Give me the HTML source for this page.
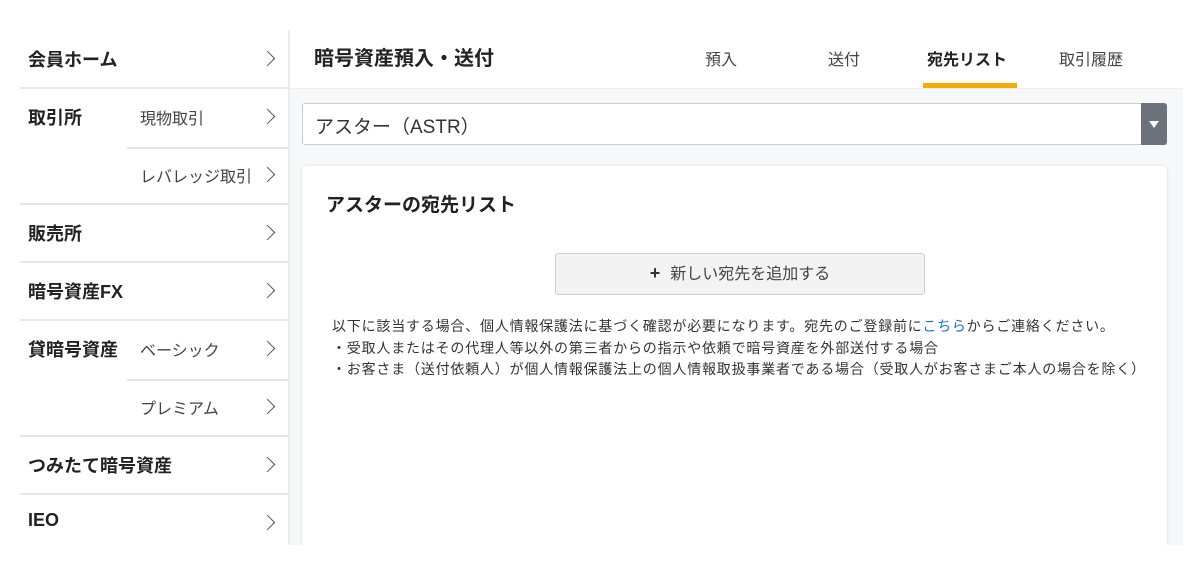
<!DOCTYPE html>
<html><head><meta charset="utf-8"><style>
*{box-sizing:border-box;margin:0;padding:0}
body{width:1200px;height:566px;background:#fff;font-family:"Liberation Sans","Noto Sans CJK JP",sans-serif;color:#333;position:relative;overflow:hidden}
.side{position:absolute;left:20px;top:31px;width:268px}
.row{position:relative;height:58px;border-bottom:2px solid #e6e6e6}
.row.last{border-bottom:none;height:56px}
.t{position:absolute;left:8px;top:15px;font-size:18px;font-weight:bold;color:#222}
.s{position:absolute;left:120px;top:16px;font-size:16px;color:#444}
.ch{position:absolute;right:15px;top:22px;width:11px;height:11px;border-right:1.5px solid #555;border-top:1.5px solid #555;transform:rotate(45deg)}
.sub{position:absolute;left:107px;right:0;bottom:-2px;border-bottom:2px solid #e6e6e6}
.vl{position:absolute;left:288px;top:30px;width:2px;height:515px;background:#ececf0}
.main{position:absolute;left:290px;top:30px;width:893px;height:515px;background:#f7f8fa;overflow:hidden}
.hdr{position:absolute;left:0;top:0;width:893px;height:59px;background:#fff;border-bottom:1px solid #eceef2}
.ttl{position:absolute;left:24px;top:12px;font-size:20px;font-weight:bold;color:#222}
.tab{position:absolute;top:16px;font-size:16px;color:#444}
.bar{position:absolute;left:633px;top:53px;width:94px;height:5px;background:#f5ab00}
.sel{position:absolute;left:12px;top:73px;width:865px;height:42px;background:#fff;border:1px solid #ccc;border-radius:3px;font-size:19px;padding:8px 12px;color:#333}
.arr{position:absolute;right:-1px;top:-1px;width:26px;height:42px;background:#6c727c;border-radius:0 3px 3px 0}
.arr:after{content:"";position:absolute;left:8px;top:18px;border-left:5px solid transparent;border-right:5px solid transparent;border-top:7px solid #fff}
.card{position:absolute;left:12px;top:136px;width:865px;height:420px;background:#fff;border-radius:4px;box-shadow:0 0 3px rgba(0,0,0,.12)}
.ct{position:absolute;left:24px;top:24px;font-size:19px;font-weight:bold;color:#222}
.btn{position:absolute;left:253px;top:87px;width:370px;height:42px;background:#f3f3f3;border:1px solid #ccc;border-radius:3px;text-align:center;font-size:16px;line-height:38px;color:#444}
.btn b{font-size:18px;margin-right:10px;color:#333}
.txt{position:absolute;left:30px;top:150px;font-size:14px;line-height:21.5px;color:#333;white-space:nowrap;letter-spacing:.8px}
.txt a{color:#1a73c8;text-decoration:none}
</style></head><body>
<div class="side">
<div class="row"><span class="t">会員ホーム</span><i class="ch"></i></div>
<div class="row" style="border-bottom:none"><span class="t">取引所</span><span class="s">現物取引</span><i class="ch"></i><div class="sub"></div></div>
<div class="row"><span class="s">レバレッジ取引</span><i class="ch"></i></div>
<div class="row"><span class="t">販売所</span><i class="ch"></i></div>
<div class="row"><span class="t">暗号資産FX</span><i class="ch"></i></div>
<div class="row" style="border-bottom:none"><span class="t">貸暗号資産</span><span class="s">ベーシック</span><i class="ch"></i><div class="sub"></div></div>
<div class="row"><span class="s">プレミアム</span><i class="ch"></i></div>
<div class="row"><span class="t">つみたて暗号資産</span><i class="ch"></i></div>
<div class="row last"><span class="t">IEO</span><i class="ch"></i></div>
</div>
<div class="vl"></div>
<div class="main">
<div class="hdr"><span class="ttl">暗号資産預入・送付</span>
<span class="tab" style="left:415px">預入</span>
<span class="tab" style="left:538px">送付</span>
<span class="tab" style="left:637px;font-weight:bold;color:#222">宛先リスト</span>
<span class="tab" style="left:769px">取引履歴</span>
<div class="bar"></div></div>
<div class="sel">アスター（ASTR）<div class="arr"></div></div>
<div class="card">
<div class="ct">アスターの宛先リスト</div>
<div class="btn"><b>+</b>新しい宛先を追加する</div>
<div class="txt">以下に該当する場合、個人情報保護法に基づく確認が必要になります。宛先のご登録前に<a>こちら</a>からご連絡ください。<br>・受取人またはその代理人等以外の第三者からの指示や依頼で暗号資産を外部送付する場合<br>・お客さま（送付依頼人）が個人情報保護法上の個人情報取扱事業者である場合（受取人がお客さまご本人の場合を除く）</div>
</div>
</div>
</body></html>
